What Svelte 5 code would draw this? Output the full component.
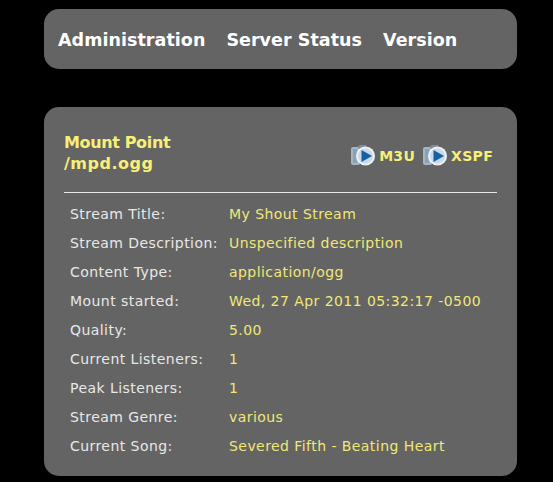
<script>
  const rows = [
    ['Stream Title:', 'My Shout Stream'],
    ['Stream Description:', 'Unspecified description'],
    ['Content Type:', 'application/ogg'],
    ['Mount started:', 'Wed, 27 Apr 2011 05:32:17 -0500'],
    ['Quality:', '5.00'],
    ['Current Listeners:', '1'],
    ['Peak Listeners:', '1'],
    ['Stream Genre:', 'various'],
    ['Current Song:', 'Severed Fifth - Beating Heart']
  ];
</script>

{#snippet playIcon()}
  <svg class="icon" width="26" height="24" viewBox="0 0 26 24">
    <rect x="1" y="3" width="9" height="18" rx="2" fill="#a3b6c8" />
    <rect x="3" y="5" width="4" height="14" rx="1" fill="#8aa1b6" />
    <path d="M7 3 L10 1 L16 1 L17 4 L10 5 Z" fill="#7f8f9f" />
    <circle cx="15.5" cy="12" r="9.5" fill="#eef2f6" />
    <circle cx="15.5" cy="12" r="7.5" fill="#c9d9e8" />
    <path d="M11.5 6 L22 12 L11.5 18 Z" fill="#17609f" />
  </svg>
{/snippet}

<div class="page">
  <nav class="panel nav">
    <a href="#admin">Administration</a>
    <a href="#status">Server Status</a>
    <a href="#version">Version</a>
  </nav>

  <section class="panel mount">
    <header>
      <h3><span class="mp">Mount Point</span><span class="file">/mpd.ogg</span></h3>
      <div class="links">
        <a href="#m3u">{@render playIcon()}M3U</a>
        <a href="#xspf">{@render playIcon()}XSPF</a>
      </div>
    </header>
    <hr />
    <table>
      <tbody>
        {#each rows as [label, value]}
          <tr>
            <td class="label">{label}</td>
            <td class="value">{value}</td>
          </tr>
        {/each}
      </tbody>
    </table>
  </section>
</div>

<style>
  :global(body) {
    margin: 0;
    background: #000;
    font-family: 'DejaVu Sans', Verdana, sans-serif;
  }

  .page {
    width: 473px;
    margin-left: 44px;
    padding-top: 9px;
    height: 473px;
    overflow: hidden;
  }

  .panel {
    background: #646464;
    border-radius: 15px;
  }

  .nav {
    height: 60px;
    box-sizing: border-box;
    padding: 2px 0 0 14px;
    display: flex;
    align-items: center;
    gap: 21px;
    margin-bottom: 38px;
  }

  .nav a {
    color: #fff;
    font-size: 17.5px;
    font-weight: bold;
    letter-spacing: 0.04px;
    text-decoration: none;
  }

  .mount {
    height: 369px;
    box-sizing: border-box;
    padding: 26px 20px 0;
  }

  header {
    display: flex;
    justify-content: space-between;
    align-items: center;
    height: 40px;
    padding-bottom: 19px;
  }

  h3 {
    margin: 0;
    color: #f8ef78;
    font-size: 16px;
    line-height: 21px;
    font-weight: bold;
  }

  .mp,
  .file {
    display: block;
  }

  .mp {
    letter-spacing: -0.36px;
  }

  .file {
    letter-spacing: 0.5px;
  }

  .links {
    display: flex;
    gap: 7px;
    padding-right: 4px;
    margin-top: 5px;
  }

  .links a {
    display: flex;
    align-items: center;
    color: #f8ef78;
    font-size: 14px;
    font-weight: bold;
    text-decoration: none;
    letter-spacing: 0.3px;
    gap: 3px;
  }

  hr {
    margin: 0;
    border: 0;
    border-top: 1px solid #e8e8e8;
  }

  table {
    border-collapse: collapse;
    margin: 6px 0 0 6px;
    font-size: 14px;
    letter-spacing: 0.44px;
  }

  td {
    padding: 0;
    height: 29px;
    white-space: nowrap;
  }

  .label {
    color: #e8e8e8;
    width: 159px;
  }

  .value {
    color: #f0e876;
  }
</style>
